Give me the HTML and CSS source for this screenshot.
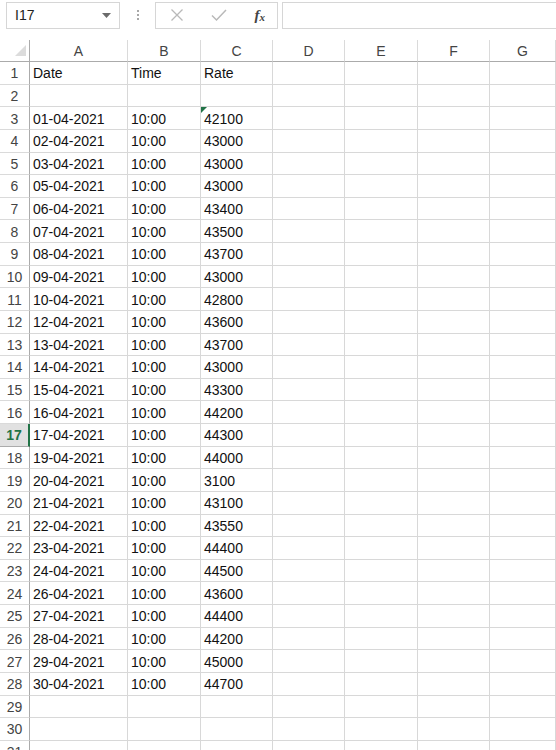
FILE: index.html
```html
<!DOCTYPE html>
<html>
<head>
<meta charset="utf-8">
<link rel="stylesheet" href="styles.css">
</head>
<body>
<div class="toolbar">
  <div class="namebox">
    <span class="name">I17</span>
    <svg class="dd" width="9" height="5" viewBox="0 0 9 5"><path d="M0 0H9L4.5 5Z" fill="#6b6b6b"/></svg>
  </div>
  <div class="grip"><i></i><i></i><i></i></div>
  <div class="fbtns">
    <svg width="14" height="14" viewBox="0 0 14 14"><path d="M1.5 1.5L12.5 12.5M12.5 1.5L1.5 12.5" stroke="#b9b9b9" stroke-width="1.3" fill="none"/></svg>
    <svg width="16" height="14" viewBox="0 0 16 14"><path d="M1 7.5L5.5 12L15 2" stroke="#b9b9b9" stroke-width="1.5" fill="none"/></svg>
    <span class="fx">f<sub>x</sub></span>
  </div>
  <div class="fbar"></div>
</div>
<div class="sheet colheads">
  <div class="ch corner"><svg width="11" height="11" viewBox="0 0 11 11"><path d="M11 0V11H0Z" fill="#dcdcdc"/></svg></div>
  <div class="ch">A</div><div class="ch">B</div><div class="ch">C</div><div class="ch">D</div><div class="ch">E</div><div class="ch">F</div><div class="ch">G</div>
</div>
<div class="sheet rows" id="body"></div>
<script src="app.js"></script>
</body>
</html>
```
FILE: app.js
```js
const rows = [
  ["Date","Time","Rate"],
  ["","",""],
  ["01-04-2021","10:00","42100"],
  ["02-04-2021","10:00","43000"],
  ["03-04-2021","10:00","43000"],
  ["05-04-2021","10:00","43000"],
  ["06-04-2021","10:00","43400"],
  ["07-04-2021","10:00","43500"],
  ["08-04-2021","10:00","43700"],
  ["09-04-2021","10:00","43000"],
  ["10-04-2021","10:00","42800"],
  ["12-04-2021","10:00","43600"],
  ["13-04-2021","10:00","43700"],
  ["14-04-2021","10:00","43000"],
  ["15-04-2021","10:00","43300"],
  ["16-04-2021","10:00","44200"],
  ["17-04-2021","10:00","44300"],
  ["19-04-2021","10:00","44000"],
  ["20-04-2021","10:00","3100"],
  ["21-04-2021","10:00","43100"],
  ["22-04-2021","10:00","43550"],
  ["23-04-2021","10:00","44400"],
  ["24-04-2021","10:00","44500"],
  ["26-04-2021","10:00","43600"],
  ["27-04-2021","10:00","44400"],
  ["28-04-2021","10:00","44200"],
  ["29-04-2021","10:00","45000"],
  ["30-04-2021","10:00","44700"],
  ["","",""],["","",""],["","",""]
];
const body = document.getElementById("body");
rows.forEach((r, i) => {
  const n = i + 1;
  const rh = document.createElement("div");
  rh.className = "rh" + (n === 17 ? " sel" : "");
  rh.textContent = n;
  body.appendChild(rh);
  for (let c = 0; c < 7; c++) {
    const d = document.createElement("div");
    d.className = "cell";
    if (c < 3) d.textContent = r[c];
    if (n === 3 && c === 2) d.classList.add("flag");
    body.appendChild(d);
  }
});
```
FILE: styles.css
```css
html, body { margin: 0; padding: 0; background: #fff; }
body { width: 556px; height: 750px; overflow: hidden; font-family: "Liberation Sans", Arial, sans-serif; }

.toolbar { display: flex; align-items: center; height: 29px; padding-top: 1px; box-sizing: border-box; }
.namebox { margin-left: 6px; width: 114px; height: 27px; box-sizing: border-box; border: 1px solid #d6d6d6; display: flex; align-items: center; justify-content: space-between; padding: 0 8px 0 8px; }
.name { font-size: 14px; color: #222; }
.dd { margin-top: 1px; }
.grip { width: 35px; display: flex; flex-direction: column; align-items: center; gap: 2px; }
.grip i { display: block; width: 2px; height: 2px; background: #a8a8a8; }
.fbtns { width: 123px; height: 27px; box-sizing: border-box; border: 1px solid #d6d6d6; display: flex; align-items: center; justify-content: space-between; padding: 0 12px 0 14px; }
.fx { font-family: "Liberation Serif", serif; font-style: italic; font-size: 15px; color: #444; font-weight: bold; }
.fx sub { font-size: 11px; vertical-align: -1px; }
.fbar { margin-left: 4px; flex: 1; height: 27px; box-sizing: border-box; border: 1px solid #d6d6d6; border-right: none; }

.sheet { display: grid; grid-template-columns: 30px 98px 73px 72px 72px 73px 72px 1fr; }
.colheads { margin-top: 11px; }
.ch { height: 22px; box-sizing: border-box; border-right: 1px solid #dadada; border-bottom: 1px solid #ababab; display: flex; align-items: center; justify-content: center; font-size: 14px; color: #444; }
.corner { border-right-color: #ababab; justify-content: flex-end; align-items: flex-end; padding: 0 3px 5px 0; }
.rows { grid-auto-rows: 22.63px; }
.rh { box-sizing: border-box; border-right: 1px solid #ababab; border-bottom: 1px solid #dadada; display: flex; align-items: center; justify-content: center; font-size: 14px; color: #444; padding-top: 1px; }
.rh.sel { background: #e1e1e1; color: #217346; font-weight: bold; border-right: 2px solid #217346; border-bottom-color: #ababab; }
.cell { position: relative; box-sizing: border-box; border-right: 1px solid #d8d8d8; border-bottom: 1px solid #d8d8d8; font-size: 14px; color: #111; padding: 1px 0 0 3px; display: flex; align-items: center; white-space: nowrap; overflow: hidden; }
.flag::before { content: ""; position: absolute; left: 0; top: 0; border-top: 6px solid #217346; border-right: 6px solid transparent; }
```
